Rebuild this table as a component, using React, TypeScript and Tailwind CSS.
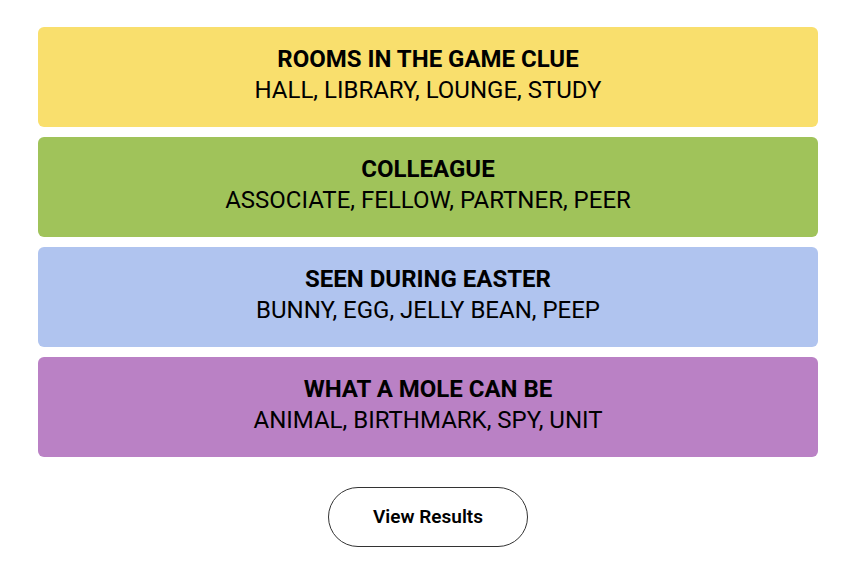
const groups = [
  {
    title: "ROOMS IN THE GAME CLUE",
    words: "HALL, LIBRARY, LOUNGE, STUDY",
    color: "bg-[#f9df6d]",
  },
  {
    title: "COLLEAGUE",
    words: "ASSOCIATE, FELLOW, PARTNER, PEER",
    color: "bg-[#a0c35a]",
  },
  {
    title: "SEEN DURING EASTER",
    words: "BUNNY, EGG, JELLY BEAN, PEEP",
    color: "bg-[#b0c4ef]",
  },
  {
    title: "WHAT A MOLE CAN BE",
    words: "ANIMAL, BIRTHMARK, SPY, UNIT",
    color: "bg-[#ba81c5]",
  },
];

const App = () => {
  return (
    <div className="flex min-h-screen flex-col items-center bg-white pt-[27px] font-['Roboto',sans-serif] text-black">
      <div className="flex w-[780px] flex-col gap-[10px]">
        {groups.map((group, index) => (
          <div
            key={index}
            className={`flex h-[100px] flex-col items-center justify-center rounded-md pb-[4px] ${group.color}`}
          >
            <h3 className="text-[24px] font-bold leading-[31px]">
              {group.title}
            </h3>
            <p className="text-[24px] leading-[31px]">{group.words}</p>
          </div>
        ))}
      </div>
      <button className="mt-[30px] h-[60px] w-[200px] rounded-full border border-[#333] bg-white text-[19px] font-semibold">
        View Results
      </button>
    </div>
  );
};

export default App;
